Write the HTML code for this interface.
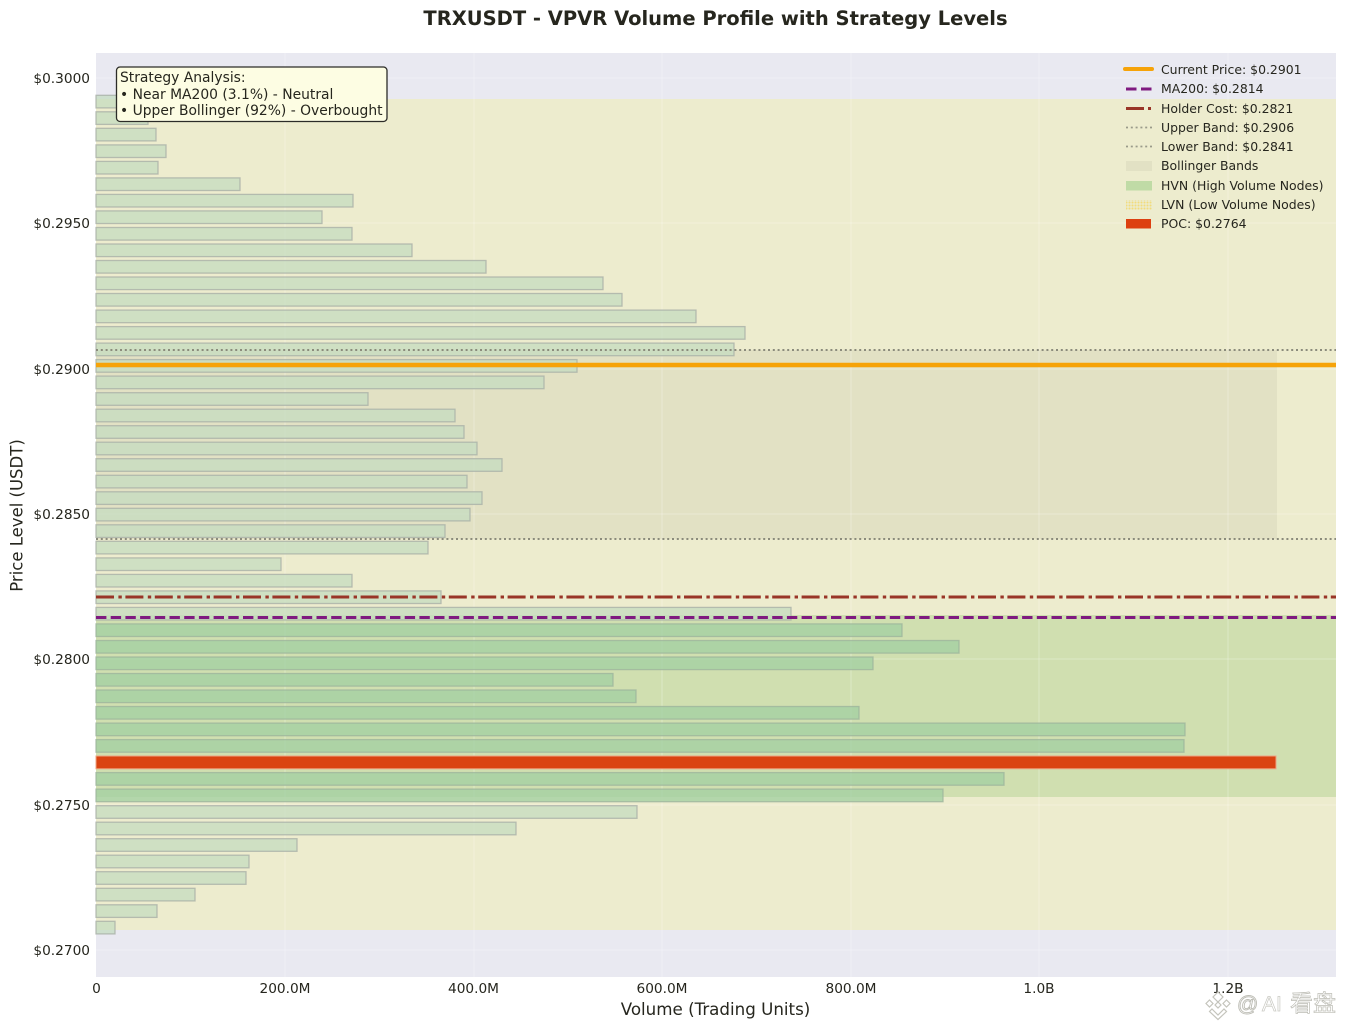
<!DOCTYPE html>
<html lang="en">
<head>
<meta charset="utf-8">
<title>TRXUSDT - VPVR Volume Profile with Strategy Levels</title>
<style>
html,body{margin:0;padding:0;background:#fff;width:1345px;height:1029px;overflow:hidden}
svg{display:block}
text{font-family:"DejaVu Sans","Liberation Sans",sans-serif;fill:#26261e}
.t{font-size:13.7px}
.l{font-size:12.45px}
.b rect{fill:#c3dcc0;fill-opacity:.74;stroke:#a9b0a8;stroke-opacity:.8;stroke-width:1.3}
.h rect{fill:#a3cfa1;fill-opacity:.78;stroke:#9db59c;stroke-opacity:.8;stroke-width:1.3}
</style>
</head>
<body>
<svg width="1345" height="1029" viewBox="0 0 1345 1029" xmlns="http://www.w3.org/2000/svg">
<defs>
<pattern id="lvn" width="3" height="3" patternUnits="userSpaceOnUse">
<rect width="3" height="3" fill="#ecebcd"/>
<circle cx="1.500" cy="1.500" r="1" fill="#f3dc7a"/>
</pattern>
</defs>
<rect x="0" y="0" width="1345" height="1029" fill="#fff"/>
<text x="715.500" y="25" text-anchor="middle" style="font-size:19.500px;font-weight:bold">TRXUSDT - VPVR Volume Profile with Strategy Levels</text>

<!-- plot -->
<rect x="96" y="53" width="1240" height="924" fill="#e9e9f1"/>
<rect x="96" y="99" width="1240" height="831" fill="#edecce"/>
<rect x="96" y="350" width="1181" height="189" fill="#e2e1c4"/>
<rect x="96" y="615" width="1240" height="182" fill="#d0dfb0"/>

<!-- grid -->
<g stroke="#fff" stroke-opacity=".28" stroke-width="1">
<path d="M285 53V977M474 53V977M662 53V977M851 53V977M1039 53V977M1228 53V977"/>
<path d="M96 78H1336M96 223H1336M96 369H1336M96 514H1336M96 659H1336M96 805H1336M96 950H1336"/>
</g>

<!-- light bars -->
<g class="b">
<rect x="96" y="95.300" width="22" height="12.600"/>
<rect x="96" y="111.800" width="52" height="12.600"/>
<rect x="96" y="128.300" width="60" height="12.600"/>
<rect x="96" y="144.900" width="70" height="12.600"/>
<rect x="96" y="161.400" width="62" height="12.600"/>
<rect x="96" y="177.900" width="144" height="12.600"/>
<rect x="96" y="194.400" width="257" height="12.600"/>
<rect x="96" y="210.900" width="226" height="12.600"/>
<rect x="96" y="227.500" width="256" height="12.600"/>
<rect x="96" y="244" width="316" height="12.600"/>
<rect x="96" y="260.500" width="390" height="12.600"/>
<rect x="96" y="277" width="507" height="12.600"/>
<rect x="96" y="293.500" width="526" height="12.600"/>
<rect x="96" y="310.100" width="600" height="12.600"/>
<rect x="96" y="326.600" width="649" height="12.600"/>
<rect x="96" y="343.100" width="638" height="12.600"/>
<rect x="96" y="359.600" width="481" height="12.600"/>
<rect x="96" y="376.100" width="448" height="12.600"/>
<rect x="96" y="392.700" width="272" height="12.600"/>
<rect x="96" y="409.200" width="359" height="12.600"/>
<rect x="96" y="425.700" width="368" height="12.600"/>
<rect x="96" y="442.200" width="381" height="12.600"/>
<rect x="96" y="458.700" width="406" height="12.600"/>
<rect x="96" y="475.300" width="371" height="12.600"/>
<rect x="96" y="491.800" width="386" height="12.600"/>
<rect x="96" y="508.300" width="374" height="12.600"/>
<rect x="96" y="524.800" width="349" height="12.600"/>
<rect x="96" y="541.300" width="332" height="12.600"/>
<rect x="96" y="557.900" width="185" height="12.600"/>
<rect x="96" y="574.400" width="256" height="12.600"/>
<rect x="96" y="590.900" width="345" height="12.600"/>
<rect x="96" y="607.400" width="695" height="12.600"/>
<rect x="96" y="805.700" width="541" height="12.600"/>
<rect x="96" y="822.200" width="420" height="12.600"/>
<rect x="96" y="838.700" width="201" height="12.600"/>
<rect x="96" y="855.200" width="153" height="12.600"/>
<rect x="96" y="871.700" width="150" height="12.600"/>
<rect x="96" y="888.300" width="99" height="12.600"/>
<rect x="96" y="904.800" width="61" height="12.600"/>
<rect x="96" y="921.300" width="19" height="12.600"/>
</g>
<!-- HVN bars -->
<g class="h">
<rect x="96" y="623.900" width="806" height="12.600"/>
<rect x="96" y="640.500" width="863" height="12.600"/>
<rect x="96" y="657" width="777" height="12.600"/>
<rect x="96" y="673.500" width="517" height="12.600"/>
<rect x="96" y="690" width="540" height="12.600"/>
<rect x="96" y="706.500" width="763" height="12.600"/>
<rect x="96" y="723.100" width="1089" height="12.600"/>
<rect x="96" y="739.600" width="1088" height="12.600"/>
<rect x="96" y="772.600" width="908" height="12.600"/>
<rect x="96" y="789.100" width="847" height="12.600"/>
</g>
<!-- POC -->
<rect x="96" y="756" width="1180" height="12.800" fill="#da4411" stroke="#eda583" stroke-width="1"/>

<!-- level lines -->
<path d="M96 350H1336M96 539H1336" stroke="#8b8b7c" stroke-width="2" stroke-dasharray="2 2.800" fill="none"/>
<path d="M96 365H1336" stroke="#f6a309" stroke-width="4.600" fill="none"/>
<path d="M96 597H1336" stroke="#993527" stroke-width="3" stroke-dasharray="18 4.400 3.400 3.600" fill="none"/>
<path d="M96 617.500H1336" stroke="#7f1a80" stroke-width="3" stroke-dasharray="10.400 4.300" fill="none"/>

<!-- annotation -->
<rect x="116.500" y="67" width="270.500" height="54.500" rx="3.500" fill="#fdfde3" stroke="#2c2c28" stroke-width="1.300"/>
<text x="120" y="82" style="font-size:13.860px">Strategy Analysis:</text>
<text x="120" y="99" style="font-size:13.860px">• Near MA200 (3.1%) - Neutral</text>
<text x="120" y="115" style="font-size:13.860px">• Upper Bollinger (92%) - Overbought</text>

<!-- legend -->
<path d="M1125 69H1152" stroke="#f6a309" stroke-width="4" stroke-linecap="round"/>
<path d="M1126 89H1152" stroke="#7f1a80" stroke-width="3" stroke-dasharray="10.500 4.500"/>
<path d="M1126 108.500H1152" stroke="#993527" stroke-width="3" stroke-dasharray="18 4 3 3"/>
<path d="M1126 127.500H1152M1126 146.500H1152" stroke="#9a9a8a" stroke-width="1.800" stroke-dasharray="2 2.800"/>
<rect x="1126" y="161" width="26" height="10" fill="#e2e1c4"/>
<rect x="1126" y="181" width="26" height="9.500" fill="#c0dba6"/>
<rect x="1126" y="200" width="26" height="9.500" fill="url(#lvn)"/>
<rect x="1126" y="219" width="25" height="9.500" fill="#dd4010"/>
<g class="l">
<text x="1161" y="74">Current Price: $0.2901</text>
<text x="1161" y="93">MA200: $0.2814</text>
<text x="1161" y="113">Holder Cost: $0.2821</text>
<text x="1161" y="132">Upper Band: $0.2906</text>
<text x="1161" y="151">Lower Band: $0.2841</text>
<text x="1161" y="170">Bollinger Bands</text>
<text x="1161" y="190">HVN (High Volume Nodes)</text>
<text x="1161" y="209">LVN (Low Volume Nodes)</text>
<text x="1161" y="228">POC: $0.2764</text>
</g>

<!-- y ticks -->
<g class="t" text-anchor="end">
<text x="90" y="83">$0.3000</text>
<text x="90" y="228">$0.2950</text>
<text x="90" y="374">$0.2900</text>
<text x="90" y="519">$0.2850</text>
<text x="90" y="664">$0.2800</text>
<text x="90" y="810">$0.2750</text>
<text x="90" y="955">$0.2700</text>
</g>
<!-- x ticks -->
<g class="t" text-anchor="middle">
<text x="96.500" y="993">0</text>
<text x="285" y="993">200.0M</text>
<text x="473.500" y="993">400.0M</text>
<text x="662" y="993">600.0M</text>
<text x="851" y="993">800.0M</text>
<text x="1039" y="993">1.0B</text>
<text x="1228" y="993">1.2B</text>
</g>
<text x="715.500" y="1015" text-anchor="middle" style="font-size:16.700px">Volume (Trading Units)</text>
<text transform="translate(22.500 515.500) rotate(-90)" text-anchor="middle" style="font-size:16.500px">Price Level (USDT)</text>

<!-- watermark -->
<g fill="#fff" stroke="#c4c4bc" stroke-width="1.200">
<path d="M1218 992l5 5-5 5-5-5z"/>
<path d="M1209.500 1000l3.500 3.500-3.500 3.500-3.500-3.500z"/>
<path d="M1226.500 1000l3.500 3.500-3.500 3.500-3.500-3.500z"/>
<path d="M1218 1002l3 3-3 3-3-3z"/>
<path d="M1212 1009l6 6 6-6 2.500 2.500-8.500 8-8.500-8z"/>
</g>
<text x="1237" y="1011" style="font-size:21px;font-family:'Liberation Sans','Noto Sans CJK SC',sans-serif;fill:#fff;stroke:#bdbdb5;stroke-width:.9">@</text>
<text x="1262" y="1011" style="font-size:21px;font-family:'Liberation Sans','Noto Sans CJK SC',sans-serif;fill:#fff;stroke:#c9c9c2;stroke-width:.7">AI</text>
<text x="1290" y="1011" style="font-size:23px;font-family:'Noto Sans CJK SC','WenQuanYi Zen Hei',sans-serif;fill:#fff;stroke:#bdbdb5;stroke-width:.7">看盘</text>
</svg>
</body>
</html>
